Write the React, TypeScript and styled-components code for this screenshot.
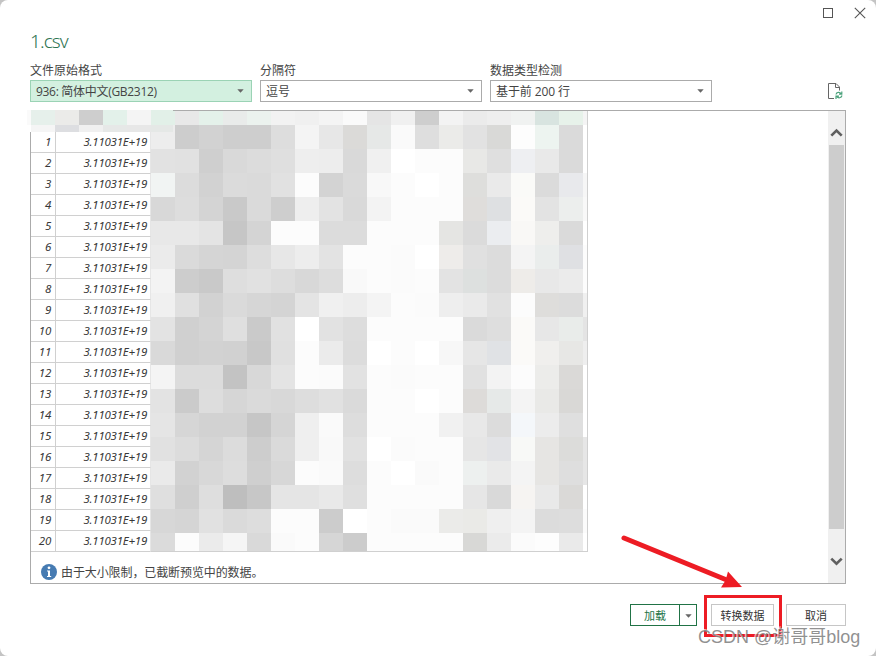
import React from 'react';
import styled, { createGlobalStyle } from 'styled-components';

const GlobalStyle = createGlobalStyle`
  * { box-sizing: border-box; }
  body {
    margin: 0;
    background: #c4c4c4;
    font-family: "Open Sans", "Noto Sans CJK SC", sans-serif;
    font-size: 12px;
    color: #444;
  }
`;

const Window = styled.main`
  position: relative;
  display: flex;
  flex-direction: column;
  width: 876px;
  height: 656px;
  background: #fff;
  border-radius: 8px;
  overflow: hidden;
`;

const TitleBar = styled.header`
  display: flex;
  justify-content: flex-end;
  gap: 20px;
  height: 26px;
  padding: 7px 10px 0 0;
`;

const Title = styled.h1`
  margin: 0 0 0 30px;
  height: 36px;
  font-family: "Noto Sans", sans-serif;
  font-size: 19px;
  line-height: 30px;
  font-weight: 300;
  letter-spacing: -0.9px;
  color: #2c7350;
`;

const Controls = styled.section`
  display: flex;
  gap: 8px;
  height: 48px;
  padding-left: 30px;
`;

const Field = styled.div`
  width: 222px;
`;

const Label = styled.div`
  height: 18px;
  line-height: 18px;
  white-space: nowrap;
`;

const Select = styled.div<{ $active?: boolean }>`
  display: flex;
  align-items: center;
  justify-content: space-between;
  height: 22px;
  padding: 0 7px 0 5px;
  border: 1px solid ${p => (p.$active ? '#9bd3b5' : '#ababab')};
  background: ${p => (p.$active ? '#d3f0e0' : '#fff')};
  line-height: 20px;
`;

const Value = styled.span<{ $spacing: number }>`
  padding-top: 1px;
  letter-spacing: ${p => p.$spacing}px;
  white-space: nowrap;
`;

const RefreshSlot = styled.div`
  margin: 20px 0 0 108px;
`;

const Panel = styled.section`
  position: relative;
  display: flex;
  width: 816px;
  height: 474px;
  margin-left: 30px;
  border: 1px solid #ababab;
`;

const Content = styled.div`
  flex: 1;
`;

const Preview = styled.div`
  display: flex;
  width: 557px;
  height: 441px;
  border-right: 1px solid #d0d0d0;
  border-bottom: 1px solid #d0d0d0;
`;

const Rows = styled.div`
  width: 120px;
  padding-top: 21px;
`;

const Row = styled.div`
  display: grid;
  grid-template-columns: 25px 95px;
  height: 21px;
  border-bottom: 1px solid #d0d0d0;
  border-right: 1px solid #e6e6e6;
  font-family: "Noto Sans", sans-serif;
  font-size: 11.5px;
  font-style: italic;
  line-height: 20px;
  text-align: right;
  letter-spacing: -0.24px;
  color: #383838;
`;

const IndexCell = styled.span`
  border-right: 1px solid #d0d0d0;
  padding-right: 4px;
`;

const NumberCell = styled.span`
  padding-right: 4px;
`;

const Mosaic = styled.div`
  display: grid;
  grid-template-columns: repeat(18, 24px) 4px;
  grid-template-rows: 14px repeat(17, 24px) 18px;
  height: 440px;
`;

const Tile = styled.i<{ $c: string }>`
  background: ${p => p.$c};
`;

const HeaderMosaic = styled.div`
  position: absolute;
  left: -4px;
  top: -1px;
  display: grid;
  grid-template-columns: 4px repeat(5, 24px) 22px;
  grid-template-rows: 15px 7px;
`;

const Notice = styled.div`
  display: flex;
  align-items: center;
  gap: 4px;
  height: 31px;
  padding: 8px 0 0 10px;
`;

const NoticeText = styled.span`
  line-height: 20px;
  padding-top: 3px;
  letter-spacing: -0.1px;
`;

const ScrollBar = styled.aside`
  display: flex;
  flex-direction: column;
  align-items: center;
  width: 17px;
  background: #f0f0f0;
  padding: 16px 0 16px;
`;

const Thumb = styled.div`
  width: 15px;
  height: 384px;
  margin: 7px 0 27px;
  background: #cdcdcd;
`;

const Footer = styled.footer`
  display: flex;
  gap: 13px;
  padding: 20px 0 0 630px;
`;

const Button = styled.div<{ $w: number; $gap?: number }>`
  width: ${p => p.$w}px;
  height: 22px;
  margin-left: ${p => p.$gap ?? 0}px;
  border: 1px solid #c6c6c6;
  font-size: 11px;
  line-height: 21px;
  text-align: center;
  color: #333;
`;

const SplitButton = styled.div`
  display: grid;
  grid-template-columns: 48px 1fr;
  width: 67px;
  height: 22px;
  border: 1px solid #217346;
  font-size: 11px;
  line-height: 21px;
  text-align: center;
  color: #217346;
`;

const SplitArrow = styled.span`
  display: flex;
  align-items: center;
  justify-content: center;
  border-left: 1px solid #217346;
`;

const Annotation = styled.svg`
  position: absolute;
  left: 0;
  top: 0;
  pointer-events: none;
`;

const Watermark = styled.div`
  position: absolute;
  left: 698px;
  top: 624px;
  font-family: "Liberation Sans", "Noto Sans CJK SC", sans-serif;
  font-size: 18px;
  line-height: 26px;
  letter-spacing: 0;
  white-space: nowrap;
  color: rgba(125, 125, 125, 0.85);
  text-shadow: -1px -1px 0 rgba(255, 255, 255, 0.7);
`;

const tiles = [
  'e2f0e8 e8 e4f1ea e9ebea ebf2ee f2 f0 f4 fa e5 f0 ce f3 eb ee f0f2f1 d8e4e0 e7f2ea f4',
  'ed cd d2 ce ce dd f4 e7 dbdad8 e6e8e7 fa de ebebe9 e2 d9d9d7 fd edf4f0 da ff',
  'e2 e1 cf d9 dc df ee ed d9 f0 ff fc fc e8e8e6 df eeeff2 e9 da ff',
  'f1f4f3 dc d2 db da e1 fc d3 da f8 fc ff fc dededc ea fafaf8 db e8e9ec f6',
  'd8 dd d4 c9 da ce ee e3 d9 f3 fc fc fc dfdddb dee0e2 fbfaf8 e3 eceeed f8',
  'e8 e8 e4 c6 d4 fc fc dc dc fc fc fc e5e5e3 db ebedf0 f9f8f6 eeeeec da ff',
  'eb da d5 d4 dd e7 ed e3 fc fc fb ff eeecea e0 dc f4 eaedec dfe0e3 fc',
  'f3 cd c9 de e1 dd d8 dd f9 fc fb fc e3 dde0df dc eeece9 e8 eb fc',
  'f0 e0 d2 da d6 d4 e4 f0 ed f4 fc fb ee ea e1 fc dedddb dc f0',
  'e3 d0 d4 df ca e1 ff e2 dd fc fc fc fc da de fbfaf8 e7 e9ecea e4',
  'd9 d0 d2 d1 c8 e0 fc eb dc ff fc ff f7 e6 e0e2e5 fbfaf8 f0efed e7e7e5 ee',
  'f4 dc dc c3 d8 e4 fc fb e2 fc fb fc fc e1 f3 fc ececea dad9d7 ff',
  'e3 cb dd d6 da d8 dd e1 da fc fc ff fc dddbd9 e6e9e8 f4 e9e9e7 d9d8d6 ff',
  'e5 d6 d2 d2 c6 d5 ef fa dd fc fc fc f1 e8 dc f4f7fa ec df ff',
  'e1 dc d5 dc cd da ef f9 e1 ff fb fc fc e6 e2e3e6 f8f9f7 e6e5e3 dcdcda e6',
  'ea d2 d8 dd cf d7 fc fa dd fc ff fa fc edf0ef ea f4 e6e5e3 de e6',
  'df cf de be c7 e5 e5 e9 df fc fc fc fc e6 d9 f6f4f2 e9 dad9d7 ff',
  'd7 d5 e1 da dd fc fc cc ff fc fa fa ebebe9 eaeae7 ef f4 dc dd fb',
  'db fc eb f5 d9 fa fc d6 cc fc fc fc fc d8d8d6 eb fb fd ea ff',
];

const headerTiles = [
  'fa e6f0eb ebebe9 ce e3f1ea f4 e2f0e8',
  'ff f5 dddee1 f0 e6e8e7 e7 e5e8e6',
];

const expand = (rows: string[]) =>
  rows.flatMap(r => r.split(' ')).map(c => '#' + (c.length === 2 ? c.repeat(3) : c));

const Caret = () => (
  <svg width="7" height="4" viewBox="0 0 7 4">
    <path d="M0.3 0.3h6.4L3.5 3.7z" fill="#666" />
  </svg>
);

const Chevron = ({ down }: { down?: boolean }) => (
  <svg width="13" height="11" viewBox="0 0 13 11">
    <path
      d={down ? 'M1.3 2.6L6.5 7.6L11.7 2.6' : 'M1.3 8.6L6.5 3.6L11.7 8.6'}
      fill="none"
      stroke="#606060"
      strokeWidth="2.7"
    />
  </svg>
);

export default function App() {
  return (
    <>
      <GlobalStyle />
      <Window>
        <TitleBar>
          <svg width="12" height="12" viewBox="0 0 12 12">
            <rect x="1.5" y="1.5" width="9" height="9" fill="none" stroke="#555" />
          </svg>
          <svg width="12" height="12" viewBox="0 0 12 12">
            <path d="M0.8 0.8L11.2 11.2M11.2 0.8L0.8 11.2" stroke="#555" strokeWidth="1.1" />
          </svg>
        </TitleBar>
        <Title>1.csv</Title>
        <Controls>
          <Field>
            <Label>文件原始格式</Label>
            <Select $active>
              <Value $spacing={-0.3}>936: 简体中文(GB2312)</Value>
              <Caret />
            </Select>
          </Field>
          <Field>
            <Label>分隔符</Label>
            <Select>
              <Value $spacing={0}>逗号</Value>
              <Caret />
            </Select>
          </Field>
          <Field>
            <Label>数据类型检测</Label>
            <Select>
              <Value $spacing={-0.1}>基于前 200 行</Value>
              <Caret />
            </Select>
          </Field>
          <RefreshSlot>
            <svg width="16" height="18" viewBox="0 0 16 18" fill="none">
              <path d="M6 16.5H0.5V1.5H8L11.5 5V8.5M7.5 1.5V5.5H11.5" stroke="#666" />
              <path d="M8 12.5C8.4 10 11.8 9.5 13.2 11.8M13.8 9.5V12.2H11M14 13.5C13.4 16.2 10 16.5 8.8 14.4M8 17V14.2H11" stroke="#4da37d" strokeWidth="1.2" />
            </svg>
          </RefreshSlot>
        </Controls>
        <Panel>
          <Content>
            <Preview>
              <Rows>
                {Array.from({ length: 20 }, (_, i) => (
                  <Row key={i}>
                    <IndexCell>{i + 1}</IndexCell>
                    <NumberCell>3.11031E+19</NumberCell>
                  </Row>
                ))}
              </Rows>
              <Mosaic>
                {expand(tiles).map((c, i) => <Tile key={i} $c={c} />)}
              </Mosaic>
            </Preview>
            <Notice>
              <svg width="16" height="16" viewBox="0 0 16 16">
                <circle cx="8" cy="8" r="8" fill="#467bb2" />
                <circle cx="8" cy="3.8" r="1.4" fill="#fff" />
                <path d="M6 6.5H9V12H10.2V13H6V12H7V7.5H6z" fill="#fff" />
              </svg>
              <NoticeText>由于大小限制，已截断预览中的数据。</NoticeText>
            </Notice>
          </Content>
          <ScrollBar>
            <Chevron />
            <Thumb />
            <Chevron down />
          </ScrollBar>
          <HeaderMosaic>
            {expand(headerTiles).map((c, i) => <Tile key={i} $c={c} />)}
          </HeaderMosaic>
        </Panel>
        <Footer>
          <SplitButton>
            <span>加载</span>
            <SplitArrow><Caret /></SplitArrow>
          </SplitButton>
          <Button $w={63} $gap={1}>转换数据</Button>
          <Button $w={60} $gap={-1}>取消</Button>
        </Footer>
        <Annotation width="876" height="656" viewBox="0 0 876 656">
          <rect x="705.5" y="596.5" width="75" height="39" fill="none" stroke="#ed1c24" strokeWidth="3" />
          <path d="M624 538L728 580.5" stroke="#ed1c24" strokeWidth="5" strokeLinecap="round" />
          <path d="M728 571.5L742 587L721 587.5L725.5 580.5z" fill="#ed1c24" />
        </Annotation>
        <Watermark>CSDN @谢哥哥blog</Watermark>
      </Window>
    </>
  );
}
